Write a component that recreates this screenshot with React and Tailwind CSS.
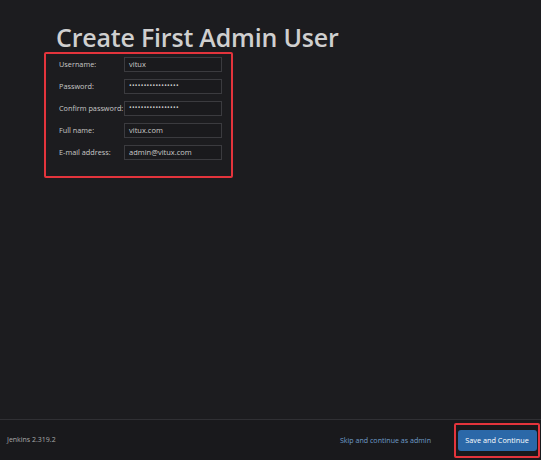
import React from "react";

const dots = "•••••••••••••••••";
const rows = [
  { label: "Username:", value: "vitux" },
  { label: "Password:", value: dots, pw: true },
  { label: "Confirm password:", value: dots, pw: true },
  { label: "Full name:", value: "vitux.com" },
  { label: "E-mail address:", value: "admin@vitux.com" },
];

export default function App() {
  return (
    <div
      className="w-[541px] h-[460px] bg-[#1c1c1f] flex flex-col overflow-hidden"
      style={{ fontFamily: '"Open Sans", "Noto Sans", sans-serif' }}
    >
      <div className="flex-1 flex flex-col">
        <h1 className="ml-[56px] mt-[23px] text-[25px] leading-[29px] font-semibold text-[#cfcfcf] tracking-[-0.2px] whitespace-nowrap">
          Create First Admin User
        </h1>
        <div className="ml-[44px] w-[189px] h-[126px] border-2 border-[#e3343c] rounded-[2px] pt-[3px] pl-[13px]">
          <div className="flex flex-col gap-[7px]">
            {rows.map((r) => (
              <div key={r.label} className="flex items-start">
                <div className="w-[65px] text-[7.3px] leading-[10px] text-[#c8c8c8] pt-[2px] whitespace-nowrap">
                  {r.label}
                </div>
                <div className="w-[98px] h-[15px] border border-[#3b3b3f] bg-[#1a1a1d] flex items-center pl-[4px] text-[7.5px] text-[#cacaca]">
                  {r.pw ? (
                    <span className="text-[7px] tracking-[0.3px]">{r.value}</span>
                  ) : (
                    r.value
                  )}
                </div>
              </div>
            ))}
          </div>
        </div>
      </div>
      <div className="h-[41px] border-t border-[#303034] bg-[#19191c] flex items-center">
        <div className="ml-[7px] text-[7px] text-[#a8a8a8] mt-[1px]">Jenkins 2.319.2</div>
        <div className="ml-auto text-[7.1px] text-[#6e9cc9]">Skip and continue as admin</div>
        <div className="ml-[23px] mr-[1px] w-[86px] h-[35px] border-2 border-[#e3343c] rounded-[2px] flex items-center justify-center">
          <div className="w-[79px] h-[21px] bg-[#2b68a8] rounded-[3px] flex items-center justify-center text-[7.3px] text-white">
            Save and Continue
          </div>
        </div>
      </div>
    </div>
  );
}
